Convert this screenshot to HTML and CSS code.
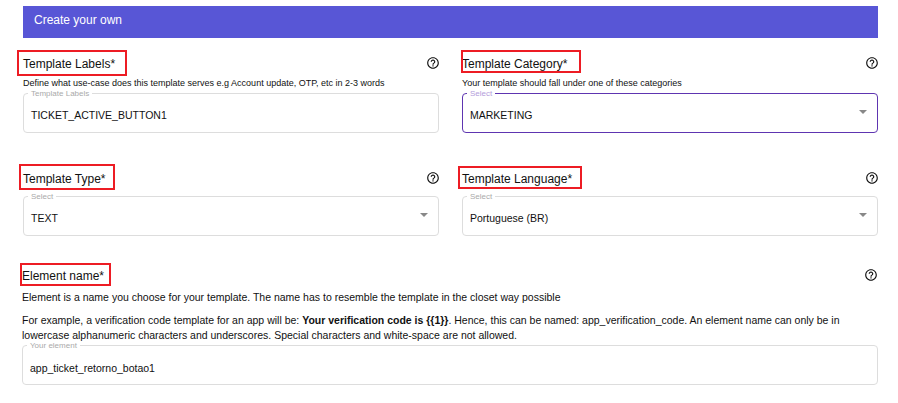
FILE: index.html
```html
<!DOCTYPE html>
<html lang="en">
  <head>
    <meta charset="UTF-8" />
    <meta name="viewport" content="width=device-width, initial-scale=1.0" />
    <title>Create your own</title>
    <link rel="stylesheet" href="styles.css">
  </head>
  <body>
    <svg class="iconDefs" width="0" height="0">
      <symbol id="help" viewBox="0 0 24 24">
        <path d="M11 18h2v-2h-2v2zm1-16C6.48 2 2 6.48 2 12s4.48 10 10 10 10-4.48 10-10S17.52 2 12 2zm0 18c-4.41 0-8-3.59-8-8s3.59-8 8-8 8 3.59 8 8-3.59 8-8 8zm0-14c-2.21 0-4 1.79-4 4h2c0-1.1.9-2 2-2s2 .9 2 2c0 2-3 1.75-3 5h2c0-2.25 3-2.5 3-5 0-2.21-1.79-4-4-4z" />
      </symbol>
    </svg>

    <div class="container">
      <div class="banner">Create your own</div>

      <div class="formGrid">
        <div class="field rowOne">
          <div class="fieldHead">
            <label class="label markOne">Template Labels*</label>
            <svg class="helpIcon"><use href="#help" /></svg>
          </div>
          <p class="hint">Define what use-case does this template serves e.g Account update, OTP, etc in 2-3 words</p>
          <fieldset class="outlined">
            <legend>Template Labels</legend>
            <span class="value">TICKET_ACTIVE_BUTTON1</span>
          </fieldset>
        </div>

        <div class="field rowOne">
          <div class="fieldHead">
            <label class="label markTwo">Template Category*</label>
            <svg class="helpIcon"><use href="#help" /></svg>
          </div>
          <p class="hint">Your template should fall under one of these categories</p>
          <fieldset class="outlined focused">
            <legend>Select</legend>
            <span class="value">MARKETING</span>
            <span class="caret"></span>
          </fieldset>
        </div>

        <div class="field">
          <div class="fieldHead">
            <label class="label markThree">Template Type*</label>
            <svg class="helpIcon"><use href="#help" /></svg>
          </div>
          <fieldset class="outlined">
            <legend>Select</legend>
            <span class="value">TEXT</span>
            <span class="caret"></span>
          </fieldset>
        </div>

        <div class="field">
          <div class="fieldHead">
            <label class="label markFour">Template Language*</label>
            <svg class="helpIcon"><use href="#help" /></svg>
          </div>
          <fieldset class="outlined">
            <legend>Select</legend>
            <span class="value">Portuguese (BR)</span>
            <span class="caret"></span>
          </fieldset>
        </div>
      </div>

      <div class="field elementField">
        <div class="fieldHead">
          <label class="label markFive">Element name*</label>
          <svg class="helpIcon"><use href="#help" /></svg>
        </div>
        <p class="desc">Element is a name you choose for your template. The name has to resemble the template in the closet way possible</p>
        <p class="desc descGap">For example, a verification code template for an app will be: <strong>Your verification code is {{1}}</strong>. Hence, this can be named: app_verification_code. An element name can only be in lowercase alphanumeric characters and underscores. Special characters and white-space are not allowed.</p>
        <fieldset class="outlined">
          <legend>Your element</legend>
          <span class="value">app_ticket_retorno_botao1</span>
        </fieldset>
      </div>
    </div>
  </body>
</html>
```

FILE: styles.css
```css
* {
  margin: 0;
  padding: 0;
  box-sizing: border-box;
}

body {
  font-family: "Liberation Sans", Arial, sans-serif;
  color: #111;
  background: #fff;
}

.iconDefs {
  position: absolute;
}

.container {
  padding: 6px 20px 0 23px;
}

.banner {
  height: 32px;
  padding-left: 11px;
  line-height: 28px;
  font-size: 12px;
  font-weight: 500;
  color: #fff;
  background: #5856d6;
}

.formGrid {
  display: grid;
  grid-template-columns: 416px 416px;
  column-gap: 23px;
  margin-top: 15px;
}

.field {
  min-width: 0;
}

.rowOne {
  height: 115px;
}

.fieldHead {
  display: flex;
  justify-content: space-between;
  align-items: center;
  height: 20px;
  margin-bottom: 4px;
}

/* red annotation boxes sit over the labels */
.label {
  position: relative;
  height: 20px;
  font-size: 12px;
  line-height: 22px;
}

.label::after {
  content: "";
  position: absolute;
  border: 2px solid #ed1c24;
}

.markOne::after {
  top: -3px;
  bottom: -3px;
  left: -6px;
  right: -12px;
}

.markTwo::after {
  top: -3px;
  bottom: 0;
  left: -1px;
  right: -14px;
}

.markThree::after {
  top: -4px;
  bottom: -2px;
  left: -4px;
  right: -9px;
}

.markFour::after {
  top: -2px;
  bottom: -1px;
  left: -4px;
  right: -10px;
}

.markFive::after {
  top: -2px;
  bottom: -1px;
  left: -2px;
  right: -7px;
}

.helpIcon {
  width: 14px;
  height: 14px;
  margin-right: -1px;
  fill: #111;
}

.hint {
  font-size: 9px;
  line-height: 12px;
}

.outlined {
  display: flex;
  align-items: center;
  height: 44px;
  padding: 0 7px 1px 4px;
  border: 1px solid #ddd;
  border-radius: 4px;
}

.outlined legend {
  padding: 0 3px;
  font-size: 8px;
  line-height: 9px;
  color: #aaa;
}

.focused {
  border-color: #5e35b1;
}

.focused legend {
  color: #b39ddb;
}

.value {
  padding-left: 3px;
  font-size: 10.5px;
  line-height: 14px;
}

.caret {
  margin-left: auto;
  margin-right: 3px;
  margin-bottom: 6px;
  border-left: 4px solid transparent;
  border-right: 4px solid transparent;
  border-top: 4px solid #888;
}

.elementField {
  margin-top: 29px;
  margin-left: -1px;
}

.elementField .fieldHead {
  margin-bottom: 5px;
}

.elementField .helpIcon {
  margin-right: 0;
}

.desc {
  font-size: 10.5px;
  line-height: 15px;
}

.descGap {
  margin-top: 8px;
}

.elementField .outlined {
  margin-top: -2px;
  padding-top: 2px;
  padding-bottom: 0;
}
```
